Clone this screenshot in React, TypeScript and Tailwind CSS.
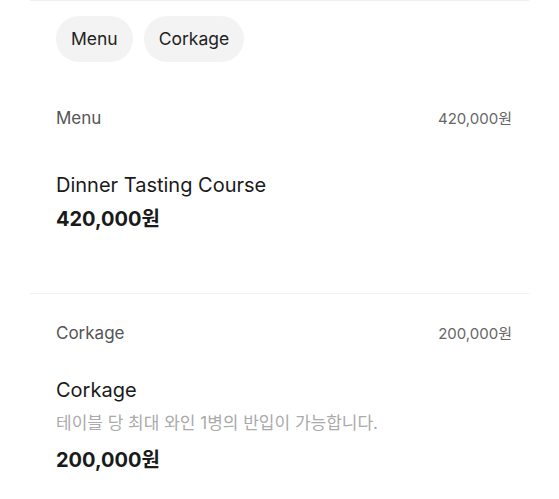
const font = {
  fontFamily: '"Inter", "Noto Sans CJK KR", sans-serif',
};

function Pill({ label }: { label: string }) {
  return (
    <div className="h-[46px] px-[15px] rounded-full bg-[#f3f3f3] flex items-center text-[17.5px] text-[#222]">
      {label}
    </div>
  );
}

function Section({
  name,
  total,
  title,
  desc,
  price,
  titleGap,
}: {
  name: string;
  total: string;
  title: string;
  desc?: string;
  price: string;
  titleGap: string;
}) {
  return (
    <div className="pl-[26px] pr-[17px]">
      <div className="flex items-center justify-between h-[24px]">
        <span className="text-[17px] text-[#555]">{name}</span>
        <span className="text-[15px] text-[#666]">{total}</span>
      </div>
      <div className={titleGap}>
        <div className="text-[20px] leading-[28px] text-[#1a1a1a]">{title}</div>
        {desc && (
          <div className="mt-[7px] text-[17px] leading-[24px] text-[#aaa]">{desc}</div>
        )}
        <div className={`${desc ? "mt-[11px]" : "mt-[6px]"} text-[20px] leading-[28px] font-bold text-[#1a1a1a]`}>
          {price}
        </div>
      </div>
    </div>
  );
}

export default function App() {
  return (
    <div className="w-[559px] h-[499px] bg-white overflow-hidden" style={font}>
      <div className="mx-[30px]">
        <div className="h-px bg-[#f0f0f0]" />
        <div className="mt-[15px] pl-[26px] flex gap-[11px]">
          <Pill label="Menu" />
          <Pill label="Corkage" />
        </div>
        <div className="mt-[45px]">
          <Section
            name="Menu"
            total="420,000원"
            title="Dinner Tasting Course"
            price="420,000원"
            titleGap="mt-[40px]"
          />
        </div>
        <div className="mt-[60px] h-px bg-[#efefef]" />
        <div className="mt-[28px]">
          <Section
            name="Corkage"
            total="200,000원"
            title="Corkage"
            desc="테이블 당 최대 와인 1병의 반입이 가능합니다."
            price="200,000원"
            titleGap="mt-[30px]"
          />
        </div>
      </div>
    </div>
  );
}
